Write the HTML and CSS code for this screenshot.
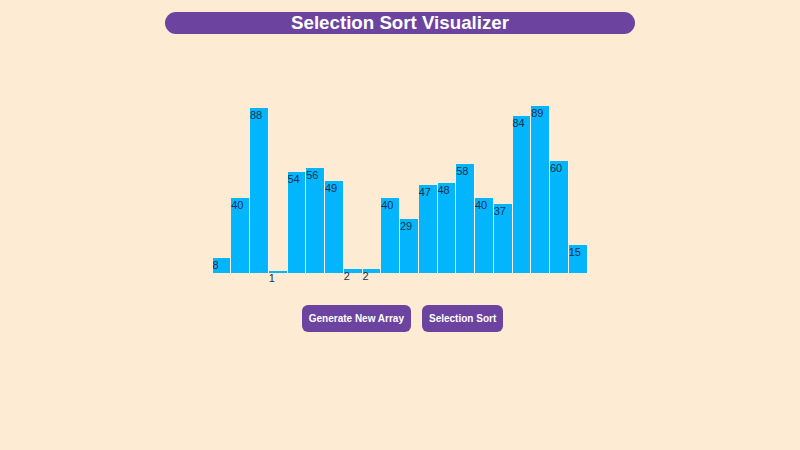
FILE: index.html
```html
<!DOCTYPE html>
<html lang="en">
<head>
  <meta charset="UTF-8" />
  <meta name="viewport" content="width=device-width, initial-scale=1.0"/>
  <title>Selection Sort Visualizer</title>
  <link rel="stylesheet" href="styles.css">
</head>

<body>
  <h3 class="title">Selection Sort Visualizer</h3>

  <div id="bars" class="bars"></div>

  <div class="controls">
    <button id="new-btn" class="btn">Generate New Array</button>
    <button id="sort-btn" class="btn">Selection Sort</button>
  </div>

  <script>
  const values = [8, 40, 88, 1, 54, 56, 49, 2, 2, 40, 29, 47, 48, 58, 40, 37, 84, 89, 60, 15];

  function render(arr) {
    const box = document.getElementById('bars');
    box.innerHTML = '';
    arr.forEach(v => {
      const bar = document.createElement('div');
      bar.className = 'bar';
      bar.style.height = (v * 1.875) + 'px';
      bar.innerHTML = '<span class="bar-label">' + v + '</span>';
      box.appendChild(bar);
    });
  }

  render(values);
  </script>
</body>
</html>
```

FILE: styles.css
```css
/* base */
* { box-sizing:border-box; }
body {
  margin:0; background:#feebd3;
  font-family:"Liberation Sans", Arial, sans-serif;
}

.title {
  width:470px; height:22px; margin:12px auto 0;
  background:#6c44a0; color:#fff; border-radius:11px;
  font-size:18.72px; font-weight:700; line-height:22px; text-align:center;
}

.bars {
  width:375px; height:170px; margin:69px auto 0;
  display:flex; align-items:flex-end;
}
.bar {
  width:18.75px; flex:none;
  background:#03b5fc; border-right:1px solid #fff8ee;
}
.bar-label {
  display:block; padding:1px 0 0 0;
  font-size:11px; line-height:13px;
  color:#15304f;
}

.controls {
  display:flex; justify-content:center; gap:11px;
  margin-top:32px; padding-left:5px;
}
.btn {
  height:27px; padding:0 7px;
  background:#6c44a0; color:#fff; border:none; border-radius:6px;
  font-family:"Liberation Sans", Arial, sans-serif; font-size:10px; font-weight:700;
  cursor:pointer;
}
```
